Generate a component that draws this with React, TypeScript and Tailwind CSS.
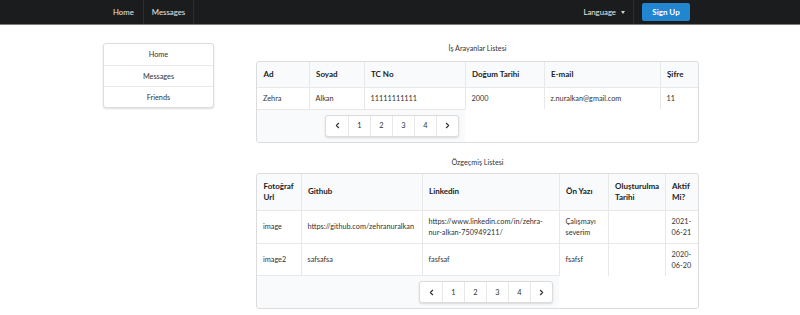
import React from 'react';
import { ChevronLeft, ChevronRight } from 'lucide-react';

const font = { fontFamily: 'Lato, "Noto Sans", sans-serif' };

const jobSeekers = [
  { ad: 'Zehra', soyad: 'Alkan', tc: '11111111111', dogum: '2000', email: 'z.nuralkan@gmail.com', sifre: '11' },
];

const cvs = [
  {
    foto: 'image',
    github: 'https://github.com/zehranuralkan',
    linkedin: 'https://www.linkedin.com/in/zehra-nur-alkan-750949211/',
    onYazi: 'Çalışmayı severim',
    tarih: '',
    aktif: '2021-06-21',
  },
  { foto: 'image2', github: 'safsafsa', linkedin: 'fasfsaf', onYazi: 'fsafsf', tarih: '', aktif: '2020-06-20' },
];

const Pagination = () => (
  <div className="float-right flex h-[22px] rounded-[3px] border border-[#dcdcdd] bg-white shadow-[0_1px_2px_0_rgba(34,36,38,0.15)]">
    {['prev', '1', '2', '3', '4', 'next'].map((p, i) => (
      <div
        key={p}
        className={`flex w-[22px] items-center justify-center text-[7.4px] text-[#333] ${i > 0 ? 'border-l border-[#e8e8e9]' : ''}`}
      >
        {p === 'prev' ? <ChevronLeft size={9} strokeWidth={3} /> : p === 'next' ? <ChevronRight size={9} strokeWidth={3} /> : p}
      </div>
    ))}
  </div>
);

const Th = ({ children, first }: { children: React.ReactNode; first?: boolean }) => (
  <th
    className={`bg-[#f9fafb] px-[6.5px] py-[7px] text-left align-middle text-[8px] font-bold text-[#222] ${first ? '' : 'border-l border-[#e8e8e9]'}`}
  >
    {children}
  </th>
);

const Td = ({ children, first }: { children: React.ReactNode; first?: boolean }) => (
  <td className={`border-t border-[#e8e8e9] px-[6px] py-[5px] align-middle ${first ? '' : 'border-l border-[#e8e8e9]'}`}>
    {children}
  </td>
);

const Footer = () => (
  <tfoot>
    <tr>
      <th colSpan={3} className="border-t border-[#e8e8e9] bg-[#f9fafb] px-[6px] py-[5px] font-normal">
        <Pagination />
      </th>
    </tr>
  </tfoot>
);

export default function App() {
  return (
    <div className="min-h-[315px] bg-white text-[7.3px] leading-[11px] text-[#333]" style={font}>
      {/* top bar */}
      <div className="h-[25px] border-b border-[#7c7c7c] bg-[#1b1c1d] text-[7.8px]">
        <div className="ml-[104px] flex h-[24px] w-[592px] items-stretch justify-between text-white/90">
          <div className="flex">
            <div className="flex items-center border-r border-white/[0.08] px-[9px]">Home</div>
            <div className="flex items-center border-r border-white/[0.08] px-[8px]">Messages</div>
          </div>
          <div className="flex">
            <div className="flex items-center gap-[5px] border-r border-white/[0.08] pl-[8px] pr-[8px]">
              <span>Language</span>
              <span className="h-0 w-0 border-x-[2.5px] border-t-[3px] border-x-transparent border-t-white/80" />
            </div>
            <div className="flex items-center pl-[8px] pr-[6px]">
              <button className="h-[18px] w-[48px] rounded-[2px] bg-[#2185d0] text-[8px] font-bold text-white">Sign Up</button>
            </div>
          </div>
        </div>
      </div>

      <div className="flex pl-[103px] pt-[18px]">
        {/* side menu */}
        <div className="w-[111px] self-start rounded-[3px] border border-[#dcdcdd] bg-white text-center text-[#333] shadow-[0_1px_2px_0_rgba(34,36,38,0.15)]">
          {['Home', 'Messages', 'Friends'].map((m, i) => (
            <div key={m} className={`flex h-[21px] items-center justify-center ${i > 0 ? 'border-t border-[#e8e8e9]' : ''}`}>
              {m}
            </div>
          ))}
        </div>

        <div className="ml-[42px] w-[443px]">
          <div className="mb-[6.5px] text-center text-[7.2px]">İş Arayanlar Listesi</div>
          <div className="overflow-hidden rounded-[3px] border border-[#dcdcdd] bg-white">
            <table className="w-full table-fixed border-collapse">
              <colgroup>
                <col className="w-[52px]" />
                <col className="w-[55px]" />
                <col className="w-[101px]" />
                <col className="w-[79px]" />
                <col className="w-[116px]" />
                <col />
              </colgroup>
              <thead>
                <tr>
                  <Th first>Ad</Th>
                  <Th>Soyad</Th>
                  <Th>TC No</Th>
                  <Th>Doğum Tarihi</Th>
                  <Th>E-mail</Th>
                  <Th>Şifre</Th>
                </tr>
              </thead>
              <tbody>
                {jobSeekers.map((j) => (
                  <tr key={j.tc}>
                    <Td first>{j.ad}</Td>
                    <Td>{j.soyad}</Td>
                    <Td>{j.tc}</Td>
                    <Td>{j.dogum}</Td>
                    <Td>{j.email}</Td>
                    <Td>{j.sifre}</Td>
                  </tr>
                ))}
              </tbody>
              <Footer />
            </table>
          </div>

          <div className="mb-[5px] mt-[14px] text-center text-[7.2px]">Özgeçmiş Listesi</div>
          <div className="overflow-hidden rounded-[3px] border border-[#dcdcdd] bg-white">
            <table className="w-full table-fixed border-collapse">
              <colgroup>
                <col className="w-[44px]" />
                <col className="w-[121px]" />
                <col className="w-[137px]" />
                <col className="w-[49px]" />
                <col className="w-[57px]" />
                <col />
              </colgroup>
              <thead>
                <tr>
                  <Th first>Fotoğraf Url</Th>
                  <Th>Github</Th>
                  <Th>Linkedin</Th>
                  <Th>Ön Yazı</Th>
                  <Th>Oluşturulma Tarihi</Th>
                  <Th>Aktif Mi?</Th>
                </tr>
              </thead>
              <tbody>
                {cvs.map((c) => (
                  <tr key={c.foto}>
                    <Td first>{c.foto}</Td>
                    <Td>{c.github}</Td>
                    <Td>{c.linkedin}</Td>
                    <Td>{c.onYazi}</Td>
                    <Td>{c.tarih}</Td>
                    <Td>{c.aktif}</Td>
                  </tr>
                ))}
              </tbody>
              <Footer />
            </table>
          </div>
        </div>
      </div>
    </div>
  );
}
